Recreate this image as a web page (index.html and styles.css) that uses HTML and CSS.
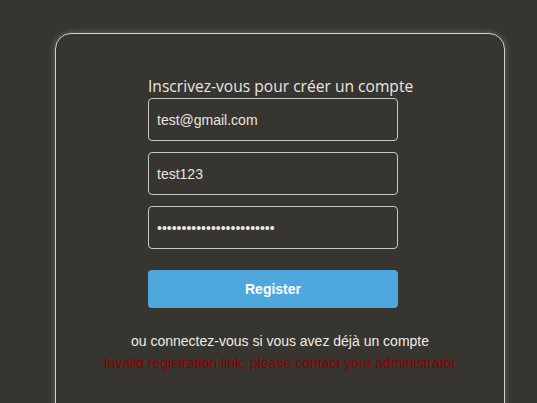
FILE: index.html
```html
<!DOCTYPE html>
<html lang="fr">
<head>
    <meta charset="UTF-8">
    <title>Inscription</title>
    <meta name="viewport" content="width=device-width, initial-scale=1">
    <link rel="stylesheet" href="styles.css">
</head>
<body>
    <div class="card">
        <form class="register-form">
            <div class="form-title">Inscrivez-vous pour créer un compte</div>
            <input type="text" class="field" value="test@gmail.com">
            <input type="text" class="field" value="test123">
            <input type="password" class="field" value="passwordpassword12345678">
            <button type="button" class="register-btn">Register</button>
        </form>
        <p class="login-hint">ou connectez-vous si vous avez déjà un compte</p>
        <p class="error-msg">Invalid registration link, please contact your administrator</p>
    </div>
</body>
</html>
```

FILE: styles.css
```css
    body {
        margin: 0;
        background: #37352f;
        font-family: 'Liberation Sans', Arial, sans-serif;
        overflow: hidden;
    }
    .card {
        width: 450px;
        height: 420px;
        margin: 33px 0 0 55px;
        padding-top: 42px;
        box-sizing: border-box;
        border: 1px solid #d4d2cc;
        border-radius: 16px;
        box-shadow: 0 0 6px rgba(255,255,255,0.25);
    }
    .register-form {
        width: 264px;
        margin: 0 auto;
        display: flex;
        flex-direction: column;
        align-items: flex-start;
    }
    .form-title {
        font-family: 'Open Sans', sans-serif;
        font-size: 15.6px;
        line-height: 20px;
        white-space: nowrap;
        color: #e8e6e1;
        margin-bottom: 2px;
    }
    .field {
        width: 250px;
        height: 43px;
        box-sizing: border-box;
        margin: 0 0 11px;
        padding: 0 8px;
        background: transparent;
        border: 1px solid #c9c7c2;
        border-radius: 4px;
        color: #e8e6e1;
        font-family: 'Liberation Sans', Arial, sans-serif;
        font-size: 14px;
        outline: none;
    }
    .register-btn {
        width: 250px;
        height: 38px;
        margin-top: 10px;
        border: none;
        border-radius: 4px;
        background: #4ea8dd;
        color: #fff;
        font-family: 'Liberation Sans', Arial, sans-serif;
        font-weight: 700;
        font-size: 14px;
        cursor: pointer;
    }
    .login-hint {
        margin: 24px 0 0;
        text-align: center;
        font-size: 14px;
        line-height: 18px;
        color: #eeece8;
    }
    .error-msg {
        margin: 4px 0 0;
        text-align: center;
        font-size: 14px;
        line-height: 18px;
        color: #8b0000;
    }
```
